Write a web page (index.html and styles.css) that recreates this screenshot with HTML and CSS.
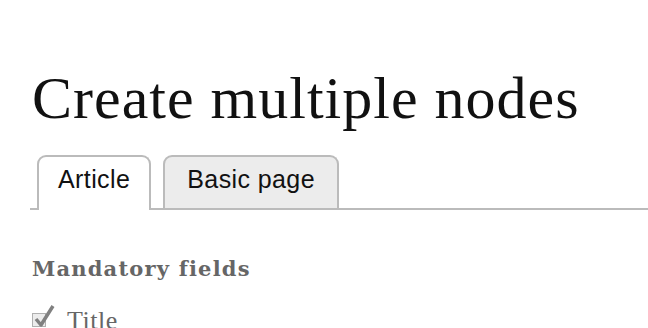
FILE: index.html
```html
<!DOCTYPE html>
<html lang="en">
<head>
    <meta charset="UTF-8">
    <title>Create multiple nodes</title>
    <link rel="stylesheet" href="styles.css">
</head>
<body>
    <div class="page">
        <h1>Create multiple nodes</h1>
        <ul class="tabs">
            <li class="tab active">Article</li>
            <li class="tab">Basic page</li>
        </ul>
        <h2>Mandatory fields</h2>
        <div class="field">
            <svg class="check" width="24" height="26" viewBox="0 0 24 26">
                <rect x="1.5" y="10.5" width="13" height="13" fill="#ececec" stroke="#b0b0b0" stroke-width="1"/>
                <path d="M5 16 L10 22 L22 3" fill="none" stroke="#808080" stroke-width="3.5" stroke-linejoin="round"/>
            </svg>
            <span class="label">Title</span>
        </div>
    </div>
</body>
</html>
```

FILE: styles.css
```css
body {
    margin: 0;
    padding: 0;
    background-color: #fff;
    font-family: "Liberation Serif", serif;
}
.page {
    padding: 64px 0 0 32px;
}
h1 {
    margin: 0;
    font-size: 60px;
    font-weight: normal;
    line-height: 68px;
    letter-spacing: 1px;
    color: #111;
}
.tabs {
    display: flex;
    align-items: flex-end;
    gap: 12px;
    list-style: none;
    margin: 23px 0 0 -2px;
    padding: 0 0 0 7px;
    border-bottom: 2px solid #bbb;
    font-family: "Liberation Sans", Arial, sans-serif;
}
.tab {
    padding: 8px 22px 15px;
    font-size: 25px;
    line-height: 28px;
    letter-spacing: 0.4px;
    color: #111;
    background-color: #ececec;
    border: 2px solid #bbb;
    border-bottom: none;
    border-radius: 9px 9px 0 0;
}
.tab.active {
    background-color: #fff;
    margin-bottom: -2px;
    padding: 8px 19px 17px;
}
h2 {
    margin: 47px 0 0;
    font-family: "DejaVu Serif", serif;
    font-size: 21px;
    line-height: 24px;
    letter-spacing: 1.2px;
    color: #666;
}
.field {
    display: flex;
    align-items: flex-start;
    gap: 12px;
    margin-top: 22px;
    color: #666;
}
.check {
    display: block;
    margin-left: -1px;
}
.label {
    padding-top: 3px;
    font-size: 26px;
    line-height: 30px;
    letter-spacing: 0.5px;
}
```
